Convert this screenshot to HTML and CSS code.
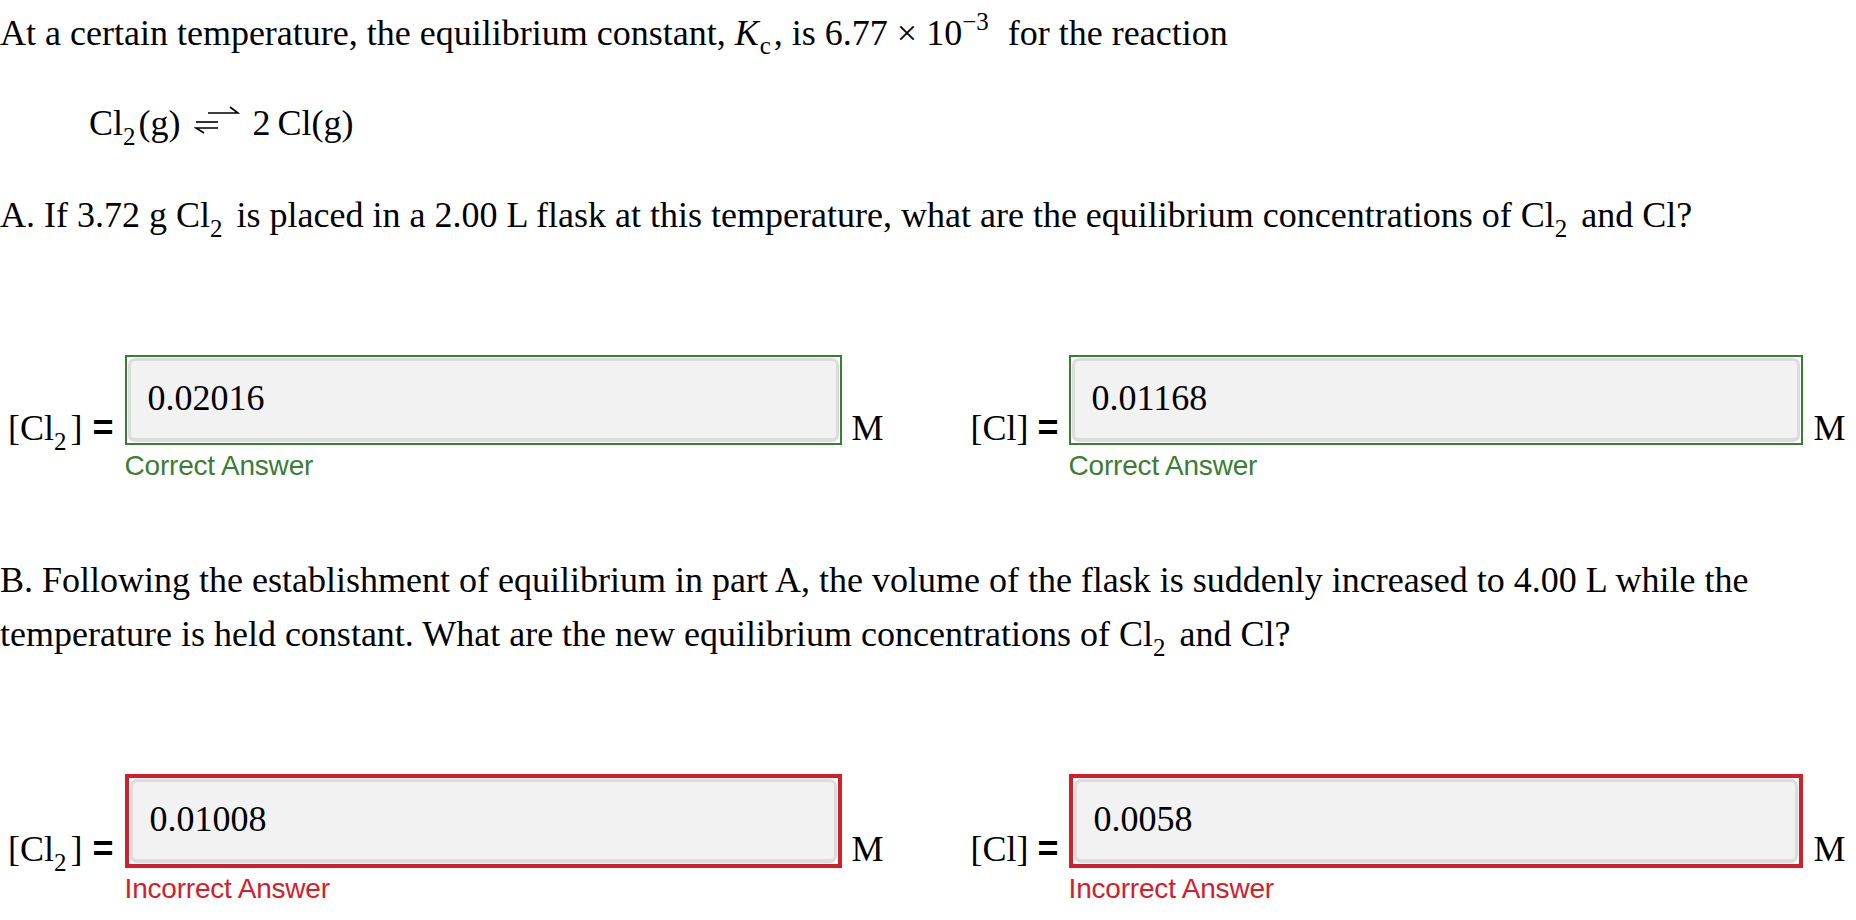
FILE: index.html
```html
<!DOCTYPE html>
<html>
<head>
<meta charset="utf-8">
<link rel="stylesheet" href="styles.css">
</head>
<body>
<div class="page">
  <p class="intro">At a certain temperature, the equilibrium constant, <i>K</i><sub class="kc">c</sub>, is 6.77 × 10<sup class="exp">−3</sup> for the reaction</p>
  <p class="eq">Cl<sub class="se">2</sub>(g)<svg class="arrow" width="46" height="36" viewBox="0 0 46 36"><path d="M14 8 H44 L36 2" fill="none" stroke="#000" stroke-width="1.6"/><path d="M2 17 H24" fill="none" stroke="#000" stroke-width="1.6"/><path d="M24 23 H2 L10 28" fill="none" stroke="#000" stroke-width="1.6"/></svg>2<span class="thin"></span>Cl(g)</p>
  <p class="qa">A. If 3.72 g Cl<sub class="sp">2</sub> is placed in a 2.00 L flask at this temperature, what are the equilibrium concentrations of Cl<sub class="sp">2</sub> and Cl?</p>

  <div class="answers">
    <span class="txt label l1">[Cl<sub class="sl">2</sub>]</span>
    <span class="txt equals e1">=</span>
    <div class="field correct w1">
      <div class="box"><div class="input">0.02016</div></div>
      <div class="fb">Correct Answer</div>
    </div>
    <span class="txt unit u1">M</span>
    <span class="txt label l2">[Cl]</span>
    <span class="txt equals e2">=</span>
    <div class="field correct w2">
      <div class="box"><div class="input">0.01168</div></div>
      <div class="fb">Correct Answer</div>
    </div>
    <span class="txt unit u2">M</span>
  </div>

  <p class="qb"><span>B. Following the establishment of equilibrium in part A, the volume of the flask is suddenly increased to 4.00 L while the</span> <span>temperature is held constant. What are the new equilibrium concentrations of Cl</span><sub class="sp">2</sub> and Cl?</p>

  <div class="answers wrong">
    <span class="txt label l1">[Cl<sub class="sl">2</sub>]</span>
    <span class="txt equals e1">=</span>
    <div class="field incorrect w1">
      <div class="box"><div class="input">0.01008</div></div>
      <div class="fb">Incorrect Answer</div>
    </div>
    <span class="txt unit u1">M</span>
    <span class="txt label l2">[Cl]</span>
    <span class="txt equals e2">=</span>
    <div class="field incorrect w2">
      <div class="box"><div class="input">0.0058</div></div>
      <div class="fb">Incorrect Answer</div>
    </div>
    <span class="txt unit u2">M</span>
  </div>
</div>
</body>
</html>
```

FILE: styles.css
```css
* { box-sizing: border-box; }

body {
  margin: 0;
  background: #ffffff;
  color: #000000;
  font-family: "Liberation Serif", "Times New Roman", serif;
  font-size: 36px;
  line-height: 54px;
}

.page {
  width: 1856px;
  padding-top: 6px;
}

p { margin: 0; }

sub, sup {
  font-size: 25px;
  line-height: 0;
  position: relative;
  vertical-align: baseline;
}

sub { top: 10px; }
sup { top: -15px; }

.kc { top: 9px; margin-left: 1px; margin-right: 3px; }
.exp { margin-right: 10px; }
.sp { margin-right: 5px; }
.sl { margin-right: 4px; }
.se { margin-right: 3px; }

.eq {
  margin-top: 36px;
  padding-left: 89px;
}

.arrow {
  vertical-align: -6px;
  margin: 0 13px 0 13px;
}

.thin {
  display: inline-block;
  width: 7px;
}

.qa { margin-top: 38px; }
.qb { margin-top: 72px; }

.answers {
  display: flex;
  align-items: flex-start;
  margin-top: 113px;
  padding-left: 8px;
}

.txt {
  padding-top: 46px;
  white-space: nowrap;
}

.wrong .txt { padding-top: 48px; }

.equals {
  font-family: "Liberation Sans", Arial, sans-serif;
  font-weight: 600;
}

.e1 { margin-left: 10px; margin-right: 11px; }
.e2 { margin-left: 9px; margin-right: 10px; }
.u1 { margin-left: 10px; }
.u2 { margin-left: 11px; }
.l2 { margin-left: 87px; }

.w1 { width: 717px; }
.w2 { width: 734px; }

.box {
  border: 2px solid #3b7d33;
  padding: 1px;
  background: #ffffff;
}

.incorrect .box {
  border: 4px solid #d0202c;
}

.input {
  height: 84px;
  border: 3px solid #dcdcdc;
  border-bottom-width: 4px;
  border-radius: 7px;
  background: #f2f2f2;
  padding: 10px 0 0 17px;
}

.fb {
  font-family: "Liberation Sans", Arial, sans-serif;
  font-size: 28px;
  line-height: 30px;
  margin-top: 6px;
  letter-spacing: -0.2px;
}

.correct .fb { color: #3b7d33; }
.incorrect .fb { color: #d0202c; }
```
